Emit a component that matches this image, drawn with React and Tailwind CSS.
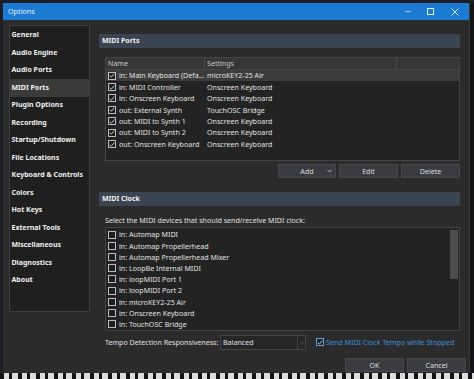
import React from "react";

const F = "font-['Noto_Sans',sans-serif]";

function Check({ checked }) {
  return (
    <div className="w-[8px] h-[8px] border border-[#bdbdbd] bg-[#1e1e1e] flex items-center justify-center shrink-0">
      {checked && (
        <svg width="7" height="7" viewBox="0 0 7 7">
          <path d="M0.8 3.6 L2.7 5.5 L6.2 1.2" stroke="#e0e0e0" strokeWidth="1" fill="none" />
        </svg>
      )}
    </div>
  );
}

const sideItems = [
  "General",
  "Audio Engine",
  "Audio Ports",
  "MIDI Ports",
  "Plugin Options",
  "Recording",
  "Startup/Shutdown",
  "File Locations",
  "Keyboard & Controls",
  "Colors",
  "Hot Keys",
  "External Tools",
  "Miscellaneous",
  "Diagnostics",
  "About",
];

const ports = [
  ["in: Main Keyboard (Defa...", "microKEY2-25 Air"],
  ["in: MIDI Controller", "Onscreen Keyboard"],
  ["in: Onscreen Keyboard", "Onscreen Keyboard"],
  ["out: External Synth", "TouchOSC Bridge"],
  ["out: MIDI to Synth 1", "Onscreen Keyboard"],
  ["out: MIDI to Synth 2", "Onscreen Keyboard"],
  ["out: Onscreen Keyboard", "Onscreen Keyboard"],
];

const clocks = [
  "in: Automap MIDI",
  "in: Automap Propellerhead",
  "in: Automap Propellerhead Mixer",
  "in: LoopBe Internal MIDI",
  "in: loopMIDI Port 1",
  "in: loopMIDI Port 2",
  "in: microKEY2-25 Air",
  "in: Onscreen Keyboard",
  "in: TouchOSC Bridge",
];

function Btn({ children, className = "" }) {
  return (
    <div className={"h-[14px] bg-[#3a3c41] border border-[#45474c] flex items-center justify-center text-[#dedede] text-[7.1px] " + className}>
      {children}
    </div>
  );
}

export default function App() {
  return (
    <div className={"w-[474px] h-[379px] bg-[#16181c] flex flex-col overflow-hidden " + F}>
      <div className="h-[3px] shrink-0 bg-[#1c2026]" />
      <div className="flex h-[370px] shrink-0">
        <div className="w-[3px] bg-[#1c2026]" />
        <div className="w-[467px] flex flex-col bg-[#2b2b2b] border-r border-[#3a3a3a]">
          {/* title bar */}
          <div className="h-[17px] bg-[#1b7ad2] flex items-center pl-[5px] text-[#eaf3fc] text-[7.2px] shrink-0">
            <span>Options</span>
            <div className="flex-1" />
            <div className="w-[22px] flex justify-center">
              <div className="w-[6px] h-px bg-[#9ec6ee]" />
            </div>
            <div className="w-[22px] flex justify-center">
              <div className="w-[7px] h-[7px] border border-[#e6f0fa]" />
            </div>
            <div className="w-[28px] flex justify-center">
              <svg width="8" height="8" viewBox="0 0 8 8">
                <path d="M0.5 0.5 L7.5 7.5 M7.5 0.5 L0.5 7.5" stroke="#e6f0fa" strokeWidth="0.9" />
              </svg>
            </div>
          </div>
          {/* body */}
          <div className="flex-1 flex pl-[6px] pt-[5px]">
            {/* sidebar */}
            <div className="w-[81px] h-[287px] bg-[#1f1f1f] border border-[#3e3e3e] pt-[0.5px]">
              {sideItems.map((s) => (
                <div
                  key={s}
                  className={
                    "h-[17.5px] flex items-center pl-[1.5px] text-[7px] font-bold text-[#f0f0f0] whitespace-nowrap " +
                    (s === "MIDI Ports" ? "bg-[#3b3b3b]" : "")
                  }
                >
                  {s}
                </div>
              ))}
            </div>
            {/* main */}
            <div className="w-[361px] ml-[9px] flex flex-col">
              <div className="mt-[9px] h-[14px] bg-[#3a4552] flex items-center pl-[3px] text-[7px] font-bold text-[#f2f2f2]">
                MIDI Ports
              </div>
              <div className="ml-[6px] mt-[9px] h-[104px] bg-[#232323] border border-[#444] flex flex-col">
                <div className="h-[12px] bg-[#363636] flex text-[7.1px] text-[#c8c8c8] border-b border-[#444] shrink-0">
                  <div className="w-[99px] border-r border-[#4a4a4a] pl-[2px] flex items-center">Name</div>
                  <div className="w-[192px] border-r border-[#4a4a4a] pl-[2px] flex items-center">Settings</div>
                  <div className="flex-1" />
                </div>
                {ports.map(([n, s], i) => (
                  <div
                    key={n}
                    className={"h-[11.4px] flex items-center text-[7.1px] text-[#e2e2e2] " + (i === 0 ? "bg-[#3c3c3c]" : "")}
                  >
                    <div className="w-[99px] flex items-center pl-[2px] gap-[3px] whitespace-nowrap overflow-hidden">
                      <Check checked />
                      <span>{n}</span>
                    </div>
                    <div className="pl-[2px] whitespace-nowrap">{s}</div>
                  </div>
                ))}
              </div>
              <div className="mt-[3px] flex justify-end gap-[3px]">
                <Btn className="w-[58px] relative">
                  <span>Add</span>
                  <svg className="absolute right-[3px] top-[4px]" width="5" height="4" viewBox="0 0 5 4">
                    <path d="M0.5 1 L2.5 3 L4.5 1" stroke="#cfcfcf" strokeWidth="0.8" fill="none" />
                  </svg>
                </Btn>
                <Btn className="w-[59px]">Edit</Btn>
                <Btn className="w-[59px]">Delete</Btn>
              </div>
              <div className="mt-[14px] h-[14px] bg-[#3a4552] flex items-center pl-[3px] text-[7px] font-bold text-[#f2f2f2]">
                MIDI Clock
              </div>
              <div className="ml-[6px] mt-[8px] text-[7.1px] text-[#e0e0e0] h-[12px] flex items-center whitespace-nowrap">
                Select the MIDI devices that should send/receive MIDI clock:
              </div>
              <div className="ml-[6px] mt-[1px] h-[104px] bg-[#232323] border border-[#444] flex pt-[1px]">
                <div className="flex-1 flex flex-col">
                  {clocks.map((c) => (
                    <div key={c} className="h-[11.3px] flex items-center pl-[2px] gap-[3px] text-[7.1px] text-[#e2e2e2] whitespace-nowrap">
                      <Check />
                      <span>{c}</span>
                    </div>
                  ))}
                </div>
                <div className="w-[8px] mr-[1px] flex flex-col pt-[1px]">
                  <div className="h-[49px] bg-[#4d4d4d]" />
                </div>
              </div>
              <div className="ml-[6px] mt-[4px] h-[15px] flex items-center text-[7.1px] text-[#e0e0e0]">
                <span className="w-[115px] whitespace-nowrap">Tempo Detection Responsiveness:</span>
                <div className="w-[86px] h-[15px] bg-[#262626] border border-[#444] flex items-center">
                  <span className="flex-1 pl-[2px]">Balanced</span>
                  <div className="w-[8px] h-full border-l border-[#444] flex items-center justify-center">
                    <svg width="4" height="3" viewBox="0 0 4 3">
                      <path d="M0.5 0.8 L2 2.3 L3.5 0.8" stroke="#777" strokeWidth="0.7" fill="none" />
                    </svg>
                  </div>
                </div>
                <div className="ml-[10px] flex items-center gap-[2px] text-[#3c8fd8]">
                  <div className="w-[8px] h-[8px] border border-[#5a9fe0] bg-[#1e1e1e] flex items-center justify-center">
                    <svg width="7" height="7" viewBox="0 0 7 7">
                      <path d="M0.8 3.6 L2.7 5.5 L6.2 1.2" stroke="#e0e0e0" strokeWidth="1" fill="none" />
                    </svg>
                  </div>
                  <span className="whitespace-nowrap">Send MIDI Clock Tempo while Stopped</span>
                </div>
              </div>
              <div className="mt-[8px] flex justify-end gap-[3px] mr-[-6px]">
                <Btn className="w-[59px] border-[#4a5563]">OK</Btn>
                <Btn className="w-[59px]">Cancel</Btn>
              </div>
            </div>
          </div>
        </div>
        <div className="w-[4px] bg-[#121417]" />
      </div>
      <div className="flex-1 bg-[repeating-linear-gradient(90deg,#141414_0px,#141414_4px,#dcdcdc_4px,#dcdcdc_9px,#141414_9px,#141414_12px,#dcdcdc_12px,#dcdcdc_18px)]" />
    </div>
  );
}
